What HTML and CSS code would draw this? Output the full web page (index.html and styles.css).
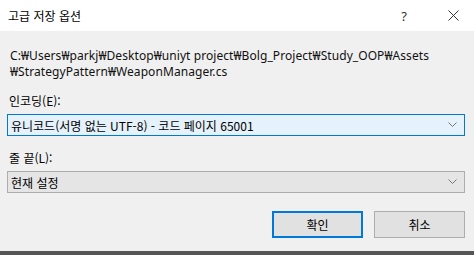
FILE: index.html
```html
<!DOCTYPE html>
<html lang="ko">
<head>
    <meta charset="UTF-8">
    <title>고급 저장 옵션</title>
    <link rel="stylesheet" href="styles.css">
</head>
<body>
    <div class="dialog">
        <div class="titlebar">
            <span class="title">고급 저장 옵션</span>
            <span class="help">?</span>
            <span class="close">
                <svg width="11" height="11" viewBox="0 0 11 11"><path d="M0.5 0.5 L10.5 10.5 M10.5 0.5 L0.5 10.5" stroke="#333" stroke-width="1" fill="none"/></svg>
            </span>
        </div>
        <div class="content">
            <p class="path">C:₩Users₩parkj₩Desktop₩uniyt project₩Bolg_Project₩Study_OOP₩Assets<br>₩StrategyPattern₩WeaponManager.cs</p>
            <label class="field-label">인코딩(E):</label>
            <div class="select active">
                <span>유니코드(서명 없는 UTF-8) - 코드 페이지 65001</span>
                <svg class="arrow" width="9" height="6" viewBox="0 0 9 6"><path d="M0.5 0.5 L4.5 4.5 L8.5 0.5" fill="none" stroke="#777" stroke-width="1"/></svg>
            </div>
            <label class="field-label">줄 끝(L):</label>
            <div class="select">
                <span>현재 설정</span>
                <svg class="arrow" width="9" height="6" viewBox="0 0 9 6"><path d="M0.5 0.5 L4.5 4.5 L8.5 0.5" fill="none" stroke="#777" stroke-width="1"/></svg>
            </div>
            <div class="buttons">
                <button type="button" class="btn default">확인</button>
                <button type="button" class="btn">취소</button>
            </div>
        </div>
        <div class="taskbar-edge"></div>
    </div>
</body>
</html>
```

FILE: styles.css
```css
body {
    margin: 0;
    font-family: "Noto Sans", "Noto Sans CJK KR", sans-serif;
    font-size: 12px;
    color: #000;
}
.dialog {
    width: 474px;
    height: 255px;
    display: flex;
    flex-direction: column;
    background-color: #f0f0f0;
}
.titlebar {
    height: 31px;
    background-color: #fff;
    display: flex;
    align-items: center;
    padding-left: 8px;
    font-family: "Noto Sans CJK KR", sans-serif;
    font-size: 12px;
}
.title {
    flex: 1;
}
.help {
    width: 56px;
    text-align: center;
    font-family: "Noto Sans", sans-serif;
    font-size: 13px;
    color: #333;
}
.close {
    width: 42px;
    display: flex;
    justify-content: center;
}
.content {
    flex: 1;
    padding: 17px 9px 0 7px;
    display: flex;
    flex-direction: column;
}
.path {
    margin: 0 0 0 3px;
    line-height: 16px;
    letter-spacing: 0.07px;
    color: #111;
}
.field-label {
    display: block;
    margin: 14px 0 6px 2px;
    line-height: 14px;
    font-family: "Noto Sans CJK KR", sans-serif;
}
.select {
    height: 20px;
    border: 1px solid #adadad;
    background-color: #e5e5e5;
    display: flex;
    align-items: center;
    padding: 0 7px 0 3px;
    font-family: "Noto Sans CJK KR", sans-serif;
}
.select span {
    flex: 1;
}
.select.active {
    border-color: #0078d7;
    background-color: #e5f1fb;
}
.select + .field-label {
    margin-top: 15px;
}
.buttons {
    display: flex;
    justify-content: flex-end;
    gap: 11px;
    margin-top: 18px;
}
.btn {
    width: 91px;
    height: 27px;
    border: 1px solid #adadad;
    background-color: #e1e1e1;
    font-family: "Noto Sans CJK KR", sans-serif;
    font-size: 12px;
    padding: 0;
}
.btn.default {
    border: 2px solid #0078d7;
}
.taskbar-edge {
    height: 4px;
    background-color: #555;
}
```
